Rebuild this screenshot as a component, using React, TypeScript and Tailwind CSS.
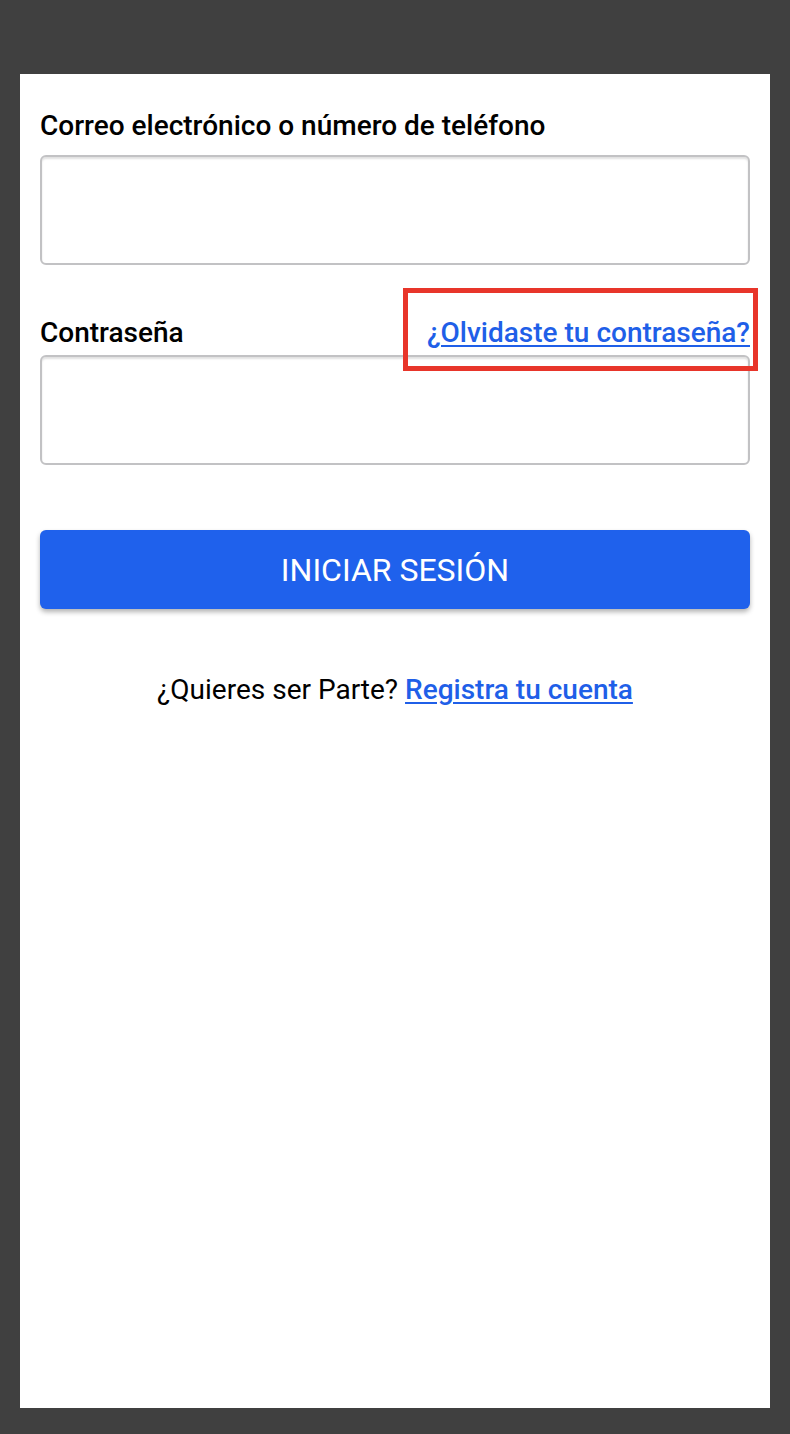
import React from "react";

export default function App() {
  return (
    <div
      className="min-h-[1434px] w-full bg-[#404040] px-[20px] pt-[74px] pb-[26px]"
      style={{ fontFamily: "Roboto, 'Noto Sans', sans-serif" }}
    >
      <div className="h-[1334px] bg-white px-[20px] pt-[35px]">
        <label className="block text-[28px] leading-[33px] font-medium text-black">
          Correo electrónico o número de teléfono
        </label>
        <input
          type="text"
          className="mt-[13px] block h-[110px] w-full rounded-[6px] border-2 border-[#c2c2c4] bg-white shadow-[inset_0_2px_2px_rgba(0,0,0,0.12)] outline-none"
        />
        <div className="relative mt-[51px] flex items-end justify-between">
          <label className="text-[28px] leading-[33px] font-medium text-black">Contraseña</label>
          <a href="#" className="text-[28px] leading-[33px] font-medium text-[#1f5fe8] underline underline-offset-[3px]">
            ¿Olvidaste tu contraseña?
          </a>
          <div className="pointer-events-none absolute right-[-8px] top-[-28px] h-[83px] w-[355px] border-[5px] border-[#e8352a]" />
        </div>
        <input
          type="password"
          className="mt-[6px] block h-[110px] w-full rounded-[6px] border-2 border-[#c2c2c4] bg-white shadow-[inset_0_2px_2px_rgba(0,0,0,0.12)] outline-none"
        />
        <button className="mt-[65px] flex h-[79px] w-full items-center justify-center rounded-[6px] bg-[#1f61ec] text-[32px] font-normal text-white shadow-[0_3px_5px_rgba(0,0,0,0.3)]">
          INICIAR SESIÓN
        </button>
        <p className="mt-[64px] text-center text-[28px] leading-[33px] text-black">
          ¿Quieres ser Parte?{" "}
          <a href="#" className="font-medium text-[#1f5fe8] underline underline-offset-[3px]">
            Registra tu cuenta
          </a>
        </p>
      </div>
    </div>
  );
}
